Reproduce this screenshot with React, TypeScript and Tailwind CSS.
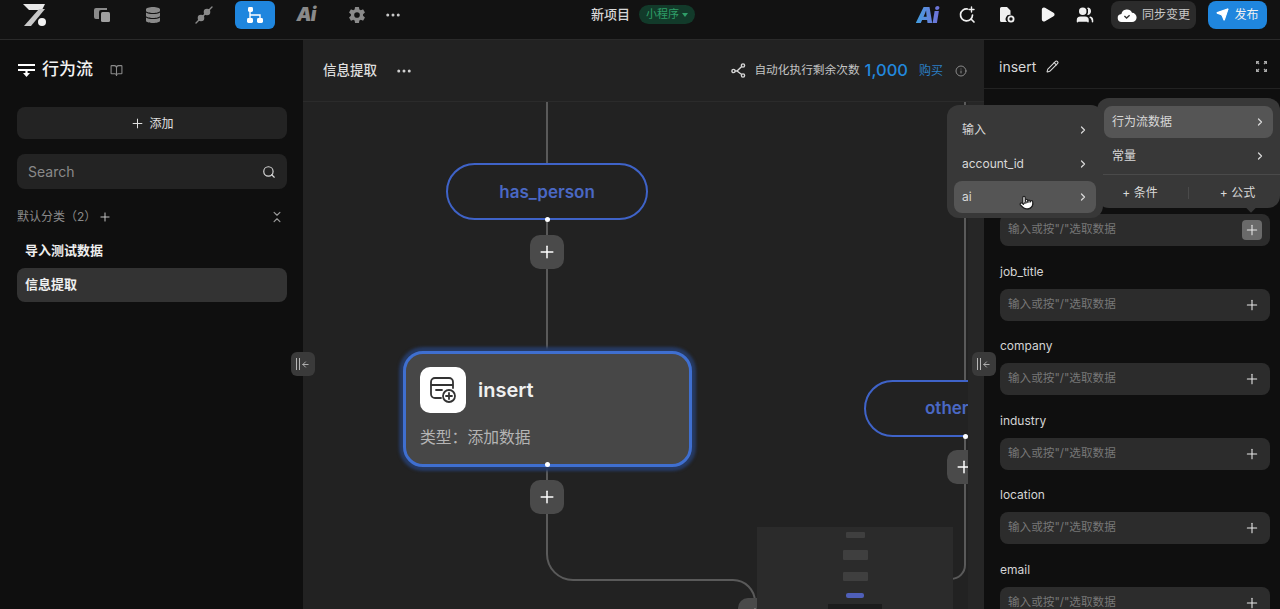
import React from 'react';
import { ChevronRight, ChevronsDownUp, Ellipsis, Pencil, Plus, Search, Users, Play, Send, Info, BookOpen, ArrowLeft, Pointer } from 'lucide-react';
import { FaDatabase } from 'react-icons/fa';
import { IoSettingsSharp } from 'react-icons/io5';

const font = { fontFamily: 'Inter, "Noto Sans CJK SC", sans-serif' };

function Logo() {
  return (
    <svg width="26" height="24" viewBox="0 0 26 24">
      <path d="M1 1h22l-3 6H7z" fill="#e8e8e8" />
      <path d="M17 6h6L9 23H2z" fill="#c8c8c8" />
      <circle cx="20" cy="19" r="4" fill="#f2f2f2" />
    </svg>
  );
}

function PagesIcon() {
  return (
    <svg width="18" height="16" viewBox="0 0 18 16" fill="#8a8a8a">
      <path d="M1 3a2 2 0 0 1 2-2h11v2H8a2 2 0 0 0-2 2v7H3a2 2 0 0 1-2-2z" />
      <rect x="8" y="5" width="9" height="10" rx="1.5" fill="#a0a0a0" />
    </svg>
  );
}

function PlugIcon() {
  return (
    <svg width="18" height="18" viewBox="0 0 18 18" fill="#8a8a8a" stroke="#8a8a8a" strokeWidth="1.4" strokeLinecap="round">
      <circle cx="6" cy="12" r="2.6" />
      <circle cx="12" cy="6" r="2.6" />
      <path d="M1 17l3-3M14 4l3-3M8 10l2-2" />
    </svg>
  );
}

function FlowIcon() {
  return (
    <svg width="18" height="18" viewBox="0 0 18 18" fill="#fff">
      <rect x="2" y="1" width="5" height="5" rx="1.4" />
      <rect x="1" y="12" width="6" height="5" rx="1.4" />
      <rect x="11" y="12" width="6" height="5" rx="1.4" />
      <path d="M4 6v6M4 9h10v3" fill="none" stroke="#fff" strokeWidth="1.4" />
    </svg>
  );
}

function SyncCloud() {
  return (
    <svg width="20" height="16" viewBox="0 0 20 16">
      <path d="M5 15a4 4 0 0 1-.6-8A5.6 5.6 0 0 1 15 5.8 4.6 4.6 0 0 1 15 15z" fill="#fff" />
      <path d="M7.4 9l2.2 2 3-2.8" fill="none" stroke="#333" strokeWidth="1.4" />
    </svg>
  );
}

function DocGear() {
  return (
    <svg width="18" height="18" viewBox="0 0 18 18" fill="#f0f0f0">
      <path d="M2 2.500A1.500 1.500 0 0 1 3.500 1H9l3.500 3.500V9a4 4 0 0 0-3.400 7H3.500A1.500 1.500 0 0 1 2 14.500z" />
      <circle cx="13" cy="13" r="2.600" fill="none" stroke="#f0f0f0" strokeWidth="1.800" />
    </svg>
  );
}

function SearchSpark() {
  return (
    <svg width="18" height="18" viewBox="0 0 18 18" fill="none" stroke="#f0f0f0" strokeWidth="1.700" strokeLinecap="round">
      <path d="M14.500 9a6 6 0 1 1-5-6M13 13l3 3" />
      <path d="M13.500 1v5M11 3.500h5" strokeWidth="1.400" />
    </svg>
  );
}

function FlowFilter() {
  return (
    <svg width="17" height="14" viewBox="0 0 17 14" fill="none" stroke="#fff" strokeWidth="2.200">
      <path d="M0 2h17M0 7h17M8.500 7v4" />
      <path d="M5 10l3.500 4 3.500-4z" fill="#fff" stroke="none" />
    </svg>
  );
}

function BranchIcon() {
  return (
    <svg width="15" height="15" viewBox="0 0 15 15" fill="none" stroke="#d8d8d8" strokeWidth="1.400">
      <circle cx="2.500" cy="8" r="1.600" />
      <circle cx="12" cy="2.500" r="1.600" />
      <circle cx="12" cy="12.500" r="1.600" />
      <path d="M4 8h2l4.700-4.500M6 8l4.700 3.500" />
    </svg>
  );
}

function ExpandTicks() {
  return (
    <svg width="11" height="11" viewBox="0 0 11 11" fill="none" stroke="#a8a8a8" strokeWidth="1.300">
      <path d="M.5 3V.5H3M8 .5h2.500V3M.5 8v2.500H3M8 10.500h2.500V8M1 1l2 2M10 1L8 3M1 10l2-2M10 10L8 8" />
    </svg>
  );
}

function InsertIcon() {
  return (
    <svg width="30" height="30" viewBox="0 0 30 30" fill="none" stroke="#333" strokeWidth="1.800" strokeLinecap="round">
      <path d="M13 23H7a4 4 0 0 1-4-4V7a4 4 0 0 1 4-4h14a4 4 0 0 1 4 4v6" />
      <path d="M3.500 10h21M8 15h6" />
      <circle cx="21" cy="21" r="6" />
      <path d="M21 18v6M18 21h6" />
    </svg>
  );
}

function AiMark({ className }: { className: string }) {
  return <span className={`font-black italic leading-none tracking-tighter ${className}`}>Ai</span>;
}

function CollapseHandle({ className }: { className: string }) {
  return (
    <div className={`absolute z-20 flex h-[24px] w-[24px] items-center justify-center gap-px rounded-md bg-[#3a3a3a] text-[#b5b5b5] ${className}`}>
      <span className="h-[12px] w-[4px] border-x border-[#b5b5b5]" />
      <ArrowLeft size={9} strokeWidth={2.500} />
    </div>
  );
}

function AddButton({ className }: { className: string }) {
  return (
    <div className={`absolute z-10 flex h-[34px] w-[34px] items-center justify-center rounded-[10px] bg-[#4a4a4a] text-white ${className}`}>
      <Plus size={20} strokeWidth={1.800} />
    </div>
  );
}

function Dot({ className }: { className: string }) {
  return <div className={`absolute z-10 h-[5px] w-[5px] rounded-full bg-white ${className}`} />;
}

function MenuRow({ label, active }: { label: string; active?: boolean }) {
  return (
    <div className={`flex h-[32px] items-center justify-between rounded-lg pl-[8px] pr-[7px] text-[12px] text-[#d8d8d8] ${active ? 'bg-[#555555]' : ''}`}>
      <span>{label}</span>
      <ChevronRight size={12} strokeWidth={2.500} />
    </div>
  );
}

function Field({ label, active }: { label: string; active?: boolean }) {
  return (
    <div className="flex flex-col gap-[11px]">
      <div className="h-[12px] text-[12px] leading-[12px] text-[#d4d4d4]">{label}</div>
      <div className="flex h-[32px] items-center justify-between rounded-lg bg-[#2c2c2c] pl-[8px] pr-[8px]">
        <span className="text-[11.6px] text-[#777777]">输入或按"/"选取数据</span>
        <div className={`flex h-[20px] w-[20px] items-center justify-center rounded-sm text-[#e8e8e8] ${active ? 'bg-[#6a6a6a]' : ''}`}>
          <Plus size={16} strokeWidth={1.600} />
        </div>
      </div>
    </div>
  );
}

export default function App() {
  return (
    <div className="relative flex h-[609px] w-[1280px] flex-col overflow-hidden bg-[#111111] text-white" style={font}>
      <header className="flex h-[40px] shrink-0 items-center border-b border-[#2a2a2a] bg-[#121212] pb-[10px] pl-[22px] pr-[13px]">
        <Logo />
        <nav className="ml-[34px] flex items-center">
          <div className="flex h-[28px] w-[40px] items-center justify-center"><PagesIcon /></div>
          <div className="ml-[11px] flex h-[28px] w-[40px] items-center justify-center"><FaDatabase size={16} color="#8a8a8a" /></div>
          <div className="ml-[11px] flex h-[28px] w-[40px] items-center justify-center"><PlugIcon /></div>
          <div className="ml-[11px] flex h-[28px] w-[40px] items-center justify-center rounded-md bg-[#1f86de]"><FlowIcon /></div>
          <div className="ml-[11px] flex h-[28px] w-[40px] items-center justify-center"><AiMark className="text-[19px] text-[#8a8a8a]" /></div>
          <div className="ml-[11px] flex h-[28px] w-[40px] items-center justify-center"><IoSettingsSharp size={18} color="#8a8a8a" /></div>
          <Ellipsis size={18} color="#c8c8c8" className="ml-[7px]" />
        </nav>
        <div className="ml-[189px] text-[13px] font-medium text-[#d8d8d8]">新项目</div>
        <div className="ml-[9px] flex h-[19px] items-center gap-[3px] rounded-full bg-[#123a2a] px-[7px] text-[11px] text-[#2f9e68]">
          小程序
          <span className="h-0 w-0 border-x-[3px] border-t-[4px] border-x-transparent border-t-[#2f9e68]" />
        </div>
        <div className="ml-auto flex items-center">
          <AiMark className="bg-linear-to-r from-[#3f9ee0] to-[#6f6fd8] bg-clip-text pr-[2px] text-[22px] text-transparent" />
          <div className="ml-[18px]"><SearchSpark /></div>
          <div className="ml-[22px]"><DocGear /></div>
          <Play size={17} color="#f4f4f4" fill="#f4f4f4" className="ml-[23px]" />
          <Users size={18} color="#f0f0f0" fill="#f0f0f0" className="ml-[20px]" />
          <div className="ml-[17px] flex h-[28px] w-[85px] items-center justify-center gap-[5px] rounded-lg bg-[#2b2b2b] text-[12px] text-[#c8c8c8]">
            <SyncCloud />
            同步变更
          </div>
          <div className="ml-[12px] flex h-[28px] w-[59px] items-center justify-center gap-[5px] rounded-lg bg-[#1f86de] text-[12px] text-[#f0f0f0]">
            <Send size={13} fill="#fff" color="#fff" />
            发布
          </div>
        </div>
      </header>

      <div className="flex min-h-0 flex-1">
        <aside className="relative w-[303px] shrink-0 bg-[#0f0f0f] pl-[17px] pr-[16px]">
          <div className="flex h-[59px] items-center pl-[1px] pt-[1px]">
            <FlowFilter />
            <span className="ml-[7px] text-[17px] font-medium text-[#f2f2f2]">行为流</span>
            <BookOpen size={13} color="#8a8a8a" className="ml-[17px]" />
          </div>
          <div className="mt-[8px] flex h-[32px] items-center justify-center gap-[4px] rounded-lg bg-[#232323] pt-[1px] text-[12px] text-[#e0e0e0]">
            <Plus size={15} strokeWidth={1.600} />
            添加
          </div>
          <div className="mt-[15px] flex h-[35px] items-center justify-between rounded-lg bg-[#232323] pl-[11px] pr-[11px]">
            <span className="text-[14px] text-[#8a8a8a]">Search</span>
            <Search size={14} color="#d8d8d8" />
          </div>
          <div className="mt-[19px] flex h-[18px] items-center justify-between pr-[3px]">
            <div className="flex items-center gap-[2px] text-[12px] text-[#8a8a8a]">
              默认分类（2）
              <Plus size={14} color="#cfcfcf" strokeWidth={1.600} />
            </div>
            <ChevronsDownUp size={14} color="#999999" />
          </div>
          <div className="mt-[8px] flex h-[34px] items-center pl-[8px] text-[13px] font-bold text-[#eeeeee]">导入测试数据</div>
          <div className="flex h-[34px] items-center rounded-lg bg-[#333333] pl-[8px] text-[13px] font-bold text-[#eeeeee]">信息提取</div>
        </aside>

        <main className="relative flex w-[681px] shrink-0 flex-col bg-[#222222]">
          <div className="flex h-[62px] shrink-0 items-center border-b border-[#2b2b2b] pl-[20px] pr-[17px]">
            <span className="text-[13.5px] font-medium text-[#dedede]">信息提取</span>
            <Ellipsis size={18} color="#d0d0d0" className="ml-[18px]" />
            <div className="ml-auto"><BranchIcon /></div>
            <span className="ml-[8px] text-[11.7px] text-[#c4c4c4]">自动化执行剩余次数</span>
            <span className="ml-[5px] text-[16.5px] font-medium text-[#2288dd]">1,000</span>
            <span className="ml-[11px] text-[12px] text-[#2b7fc4]">购买</span>
            <Info size={12} color="#8a8a8a" className="ml-[12px]" />
          </div>

          <div className="relative min-h-0 flex-1 overflow-hidden">
            <svg className="absolute inset-0" width="681" height="507" fill="none" stroke="#5a5a5a" strokeWidth="2">
              <path d="M244 0v62M244 117v133M244 362v90a26 26 0 0 0 26 26h160a22 22 0 0 1 22 22v10" />
              <path d="M662 0v280M662 335v128a14 14 0 0 1-14 14h-6" />
            </svg>
            <div className="absolute left-[143px] top-[61px] flex h-[57px] w-[202px] items-center justify-center rounded-full border-2 border-[#3f63c8] bg-[#222222] pt-[3px] text-[17px] font-semibold text-[#4a68c4]">has_person</div>
            <Dot className="left-[242px] top-[115px]" />
            <AddButton className="left-[227px] top-[133px]" />

            <div className="absolute left-[100px] top-[249px] flex h-[116px] w-[289px] flex-col rounded-[20px] border-[3px] border-[#3f6fd0] bg-[#474747] pl-[14px] pt-[13px] shadow-[0_0_3px_4px_#263a63]">
              <div className="flex items-center">
                <div className="flex h-[46px] w-[46px] items-center justify-center rounded-[10px] bg-white"><InsertIcon /></div>
                <span className="ml-[12px] text-[20px] font-semibold text-[#f0f0f0]">insert</span>
              </div>
              <div className="mt-[13px] text-[15.8px] text-[#b4b4b4]">类型：添加数据</div>
            </div>
            <Dot className="left-[242px] top-[360px]" />
            <AddButton className="left-[227px] top-[378px]" />

            <div className="absolute left-[561px] top-[278px] flex h-[57px] w-[202px] items-center rounded-l-full border-2 border-[#3f63c8] bg-[#222222] pl-[59px] text-[17px] font-semibold text-[#4a68c4]">other</div>
            <Dot className="left-[660px] top-[332px]" />
            <AddButton className="left-[644px] top-[348px]" />

            <AddButton className="left-[435px] top-[496px]" />
            <div className="absolute left-[454px] top-[425px] z-10 flex h-[82px] w-[196px] flex-col items-center bg-[#2b2b2b] pt-[5px]">
              <div className="h-[6px] w-[19px] rounded-[1px] bg-[#3f3f3f]" />
              <div className="mt-[12px] h-[10px] w-[25px] rounded-[1px] bg-[#3f3f3f]" />
              <div className="mt-[12px] h-[10px] w-[25px] rounded-[1px] bg-[#3f3f3f]" />
              <div className="mt-[12px] h-[5px] w-[18px] rounded-[2px] bg-[#4f5fb8]" />
              <div className="mt-[6px] h-[5px] w-[54px] bg-[#1c1c1c]" />
            </div>
            <div className="absolute left-[665px] top-0 z-10 h-full w-[16px] bg-[#262626]" />
          </div>
        </main>

        <aside className="relative min-w-0 flex-1 bg-[#0f0f0f]">
          <div className="flex h-[49px] items-center justify-between border-b border-[#222222] pl-[15px] pr-[13px] pt-[4px]">
            <div className="flex items-center gap-[10px] text-[14px] text-[#d8d8d8]">
              insert
              <Pencil size={13} color="#d8d8d8" />
            </div>
            <ExpandTicks />
          </div>
          <div className="flex flex-col gap-[19.500px] pl-[16px] pr-[10px] pt-[102px]">
            <Field label="" active />
            <Field label="job_title" />
            <Field label="company" />
            <Field label="industry" />
            <Field label="location" />
            <Field label="email" />
          </div>
        </aside>
      </div>

      <CollapseHandle className="left-[291px] top-[352px]" />
      <CollapseHandle className="left-[972px] top-[352px]" />

      <div className="absolute left-[947px] top-[105px] z-30 flex w-[156px] flex-col gap-[1.500px] rounded-xl bg-[#383838] pb-[5px] pl-[7px] pr-[7px] pt-[9px]">
        <MenuRow label="输入" />
        <MenuRow label="account_id" />
        <MenuRow label="ai" active />
      </div>
      <Pointer size={15} color="#222222" fill="#ffffff" className="absolute left-[1019px] top-[195px] z-40" />

      <div className="absolute left-[1097px] top-[98px] z-20 flex w-[183px] flex-col rounded-xl bg-[#383838] pt-[8px]">
        <div className="flex flex-col gap-[2px] px-[7px] pb-[2px]">
          <MenuRow label="行为流数据" active />
          <MenuRow label="常量" />
        </div>
        <div className="flex h-[34px] items-center border-t border-[#4a4a4a] pt-[2px] text-[12px] text-[#d8d8d8]">
          <span className="w-[91px] pr-[5px] text-center">+ 条件</span>
          <span className="h-[12px] w-px bg-[#4a4a4a]" />
          <span className="flex-1 pl-[6px] text-center">+ 公式</span>
        </div>
      </div>
      <div className="absolute left-[1247px] top-[203px] z-10 h-[8px] w-[8px] rotate-45 bg-[#383838]" />
    </div>
  );
}
